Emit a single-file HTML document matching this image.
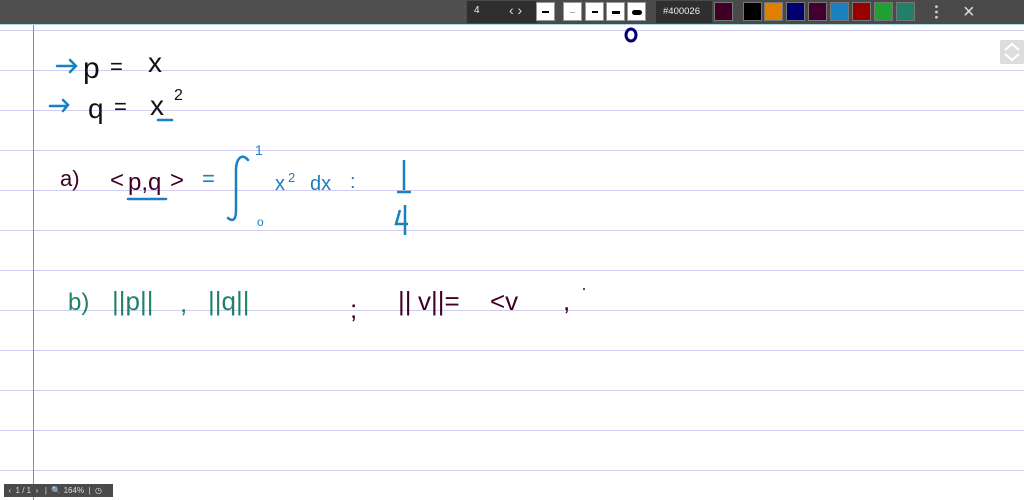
<!DOCTYPE html>
<html><head><meta charset="utf-8"><style>
html,body{margin:0;padding:0;width:1024px;height:500px;overflow:hidden;background:#fff;font-family:"Liberation Sans",sans-serif}
.abs{position:absolute}
.line{position:absolute;left:0;width:1024px;height:1px;background:#cfcdf0}
#bar{position:absolute;left:0;top:0;width:1024px;height:24px;background:#505050;border-bottom:1px solid #a8d8e8}
#tb{position:absolute;left:466px;top:0;width:558px;height:24px;background:#4a4a4a}
.box{position:absolute;top:2px;height:19px;background:#fff;border:1px solid #999;box-sizing:border-box}
.sw{position:absolute;top:2px;width:19px;height:19px;box-sizing:border-box;border:1px solid #777}
</style></head><body>
<div class="line" style="top:30px"></div>
<div class="line" style="top:70px"></div>
<div class="line" style="top:110px"></div>
<div class="line" style="top:150px"></div>
<div class="line" style="top:190px"></div>
<div class="line" style="top:230px"></div>
<div class="line" style="top:270px"></div>
<div class="line" style="top:310px"></div>
<div class="line" style="top:350px"></div>
<div class="line" style="top:390px"></div>
<div class="line" style="top:430px"></div>
<div class="line" style="top:470px"></div>
<div class="abs" style="left:33px;top:0;width:1px;height:500px;background:#e8608a"></div>
<div id="bar"></div>
<div id="tb">
 <div class="abs" style="left:1px;top:1px;width:70px;height:22px;background:#2f2f2f"></div>
 <div class="abs" style="left:8px;top:5px;color:#eee;font-size:10px">4</div>
 <div class="abs" style="left:43px;top:2px;color:#ddd;font-size:14px">&lsaquo; &rsaquo;</div>
 <div class="box" style="left:70px;width:19px"><div class="abs" style="left:5px;top:8px;width:7px;height:2px;background:#000"></div></div>
 <div class="box" style="left:97px;width:19px"><div class="abs" style="left:6px;top:9px;width:5px;height:1px;background:#aaa"></div></div>
 <div class="box" style="left:119px;width:19px"><div class="abs" style="left:6px;top:8px;width:6px;height:2px;background:#000"></div></div>
 <div class="box" style="left:140px;width:19px"><div class="abs" style="left:5px;top:8px;width:8px;height:3px;background:#000"></div></div>
 <div class="box" style="left:161px;width:19px"><div class="abs" style="left:4px;top:7px;width:10px;height:5px;border-radius:3px;background:#000"></div></div>
 <div class="abs" style="left:190px;top:1px;width:56px;height:22px;background:#2f2f2f"></div>
 <div class="abs" style="left:197px;top:6px;color:#eee;font-size:9.5px">#400026</div>
 <div class="sw" style="left:248px;background:#400026"></div>
 <div class="sw" style="left:277px;background:#000"></div>
 <div class="sw" style="left:298px;background:#e08000"></div>
 <div class="sw" style="left:320px;background:#000070"></div>
 <div class="sw" style="left:342px;background:#400030"></div>
 <div class="sw" style="left:364px;background:#1a80c0"></div>
 <div class="sw" style="left:386px;background:#990000"></div>
 <div class="sw" style="left:408px;background:#20a030"></div>
 <div class="sw" style="left:430px;background:#208068"></div>
 <div class="abs" style="left:469px;top:4px;width:3px;height:16px;background:radial-gradient(circle,#ccc 1.3px,transparent 1.5px) 0 0/3px 5.3px"></div>
 <div class="abs" style="left:497px;top:1px;color:#ddd;font-size:20px">&times;</div>
</div>
<div class="abs" style="left:1000px;top:40px;width:24px;height:24px;background:#ddd"></div>
<svg class="abs" style="left:1000px;top:40px" width="24" height="24"><path d="M5 10l7-6 7 6M5 14l7 6 7-6" stroke="#fff" stroke-width="2" fill="none"/></svg>

<div class="abs" style="left:4px;top:484px;width:109px;height:13px;background:#4a4a4a;color:#ddd;font-size:8px;line-height:13px;white-space:pre">  ‹  1 / 1  ›   |  🔍 164%  |  ◷</div>

<svg class="abs" style="left:0;top:0" width="1024" height="500" font-family="Liberation Sans, sans-serif">
 <ellipse cx="631" cy="35" rx="5" ry="6" stroke="#000070" stroke-width="3" fill="none"/>
 <g stroke="#1a80c0" stroke-width="2.5" fill="none" stroke-linecap="round">
  <path d="M57 66h18M70 60l6 6-6 6"/>
  <path d="M50 106h17M63 100l5 5-5 6"/>
  <path d="M128 199h38"/>
  <path d="M248 160c-7-8-12 0-12 10v40c0 10-3 12-8 8"/>
  <path d="M158 120h14"/>
 </g>
 <text x="83" y="78" font-size="30" fill="#111">p</text>
 <text x="110" y="74" font-size="22" fill="#111">=</text>
 <text x="148" y="72" font-size="28" fill="#111">x</text>
 <text x="88" y="118" font-size="28" fill="#111">q</text>
 <text x="114" y="114" font-size="22" fill="#111">=</text>
 <text x="150" y="115" font-size="28" fill="#111">x</text>
 <text x="174" y="100" font-size="16" fill="#111">2</text>
 <text x="60" y="186" font-size="22" fill="#400026">a)</text>
 <text x="110" y="188" font-size="24" fill="#400026">&lt;</text>
 <text x="128" y="190" font-size="24" fill="#400026">p,q</text>
 <text x="170" y="188" font-size="24" fill="#400026">&gt;</text>
 <text x="202" y="186" font-size="22" fill="#1a80c0">=</text>
 <text x="255" y="155" font-size="14" fill="#1a80c0">1</text>
 <text x="257" y="226" font-size="12" fill="#1a80c0">o</text>
 <text x="275" y="190" font-size="20" fill="#1a80c0">x</text>
 <text x="288" y="182" font-size="13" fill="#1a80c0">2</text>
 <text x="310" y="190" font-size="20" fill="#1a80c0">dx</text>
 <text x="350" y="188" font-size="20" fill="#1a80c0">:</text>
 <g stroke="#1a80c0" stroke-width="2.5" fill="none"><path d="M404 160v30M397 192h14M400 210l-4 14h12M405 205v30"/></g>
 <text x="68" y="310" font-size="24" fill="#208068">b)</text>
 <text x="112" y="310" font-size="26" fill="#208068">||p||</text>
 <text x="180" y="312" font-size="26" fill="#208068">,</text>
 <text x="208" y="310" font-size="26" fill="#208068">||q||</text>
 <text x="350" y="318" font-size="26" fill="#400026">;</text>
 <text x="398" y="310" font-size="26" fill="#400026">||</text>
 <text x="418" y="310" font-size="26" fill="#400026">v||=</text>
 <text x="490" y="310" font-size="26" fill="#400026">&lt;v</text>
 <text x="563" y="310" font-size="26" fill="#400026">,</text>
 <circle cx="584" cy="289" r="1" fill="#400026"/>
</svg>
</body></html>
